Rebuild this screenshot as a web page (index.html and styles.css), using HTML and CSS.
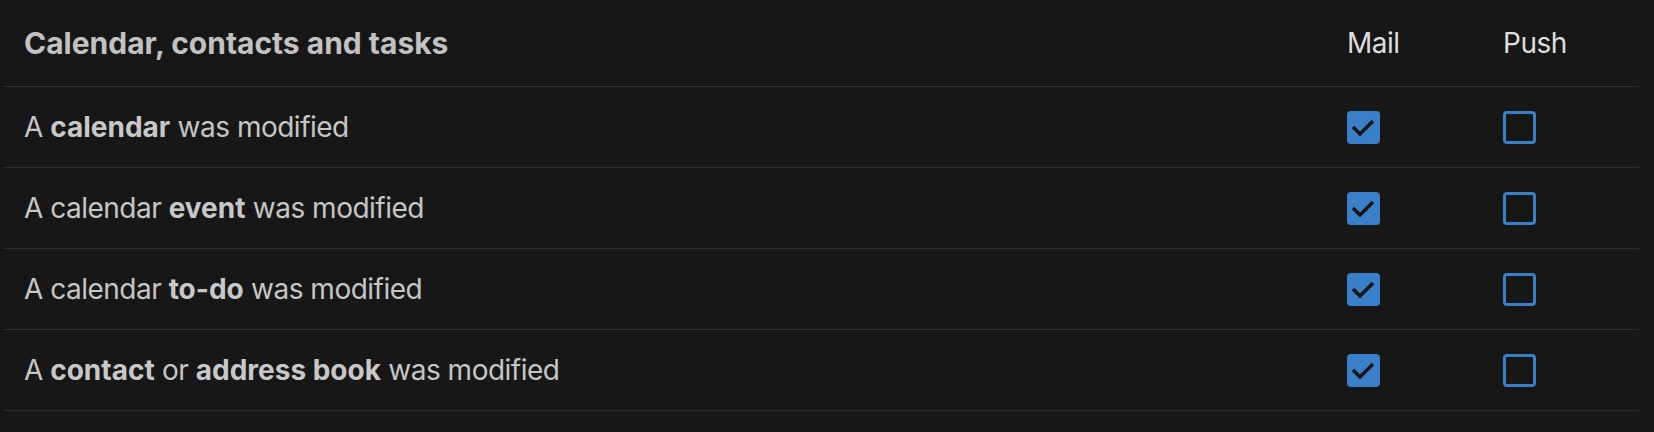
FILE: index.html
```html
<!DOCTYPE html>
<html lang="en">
<head>
<meta charset="utf-8">
<title>Notifications</title>
<link rel="stylesheet" href="styles.css">
</head>
<body>
<div class="table">
  <div class="row head">
    <div class="cell title"><span>Calendar, contacts and tasks</span></div>
    <div class="cell colhead"><span>Mail</span></div>
    <div class="cell colhead"><span>Push</span></div>
  </div>
  <div class="row">
    <div class="cell label"><span>A <b>calendar</b> was modified</span></div>
    <div class="cell"><span class="box checked"><svg viewBox="0 0 33 33"><polyline points="6,16 13,23 26,10"/></svg></span></div>
    <div class="cell"><span class="box"></span></div>
  </div>
  <div class="row">
    <div class="cell label"><span>A calendar <b>event</b> was modified</span></div>
    <div class="cell"><span class="box checked"><svg viewBox="0 0 33 33"><polyline points="6,16 13,23 26,10"/></svg></span></div>
    <div class="cell"><span class="box"></span></div>
  </div>
  <div class="row">
    <div class="cell label"><span>A calendar <b>to-do</b> was modified</span></div>
    <div class="cell"><span class="box checked"><svg viewBox="0 0 33 33"><polyline points="6,16 13,23 26,10"/></svg></span></div>
    <div class="cell"><span class="box"></span></div>
  </div>
  <div class="row">
    <div class="cell label"><span>A <b>contact</b> or <b>address book</b> was modified</span></div>
    <div class="cell"><span class="box checked"><svg viewBox="0 0 33 33"><polyline points="6,16 13,23 26,10"/></svg></span></div>
    <div class="cell"><span class="box"></span></div>
  </div>
</div>
</body>
</html>
```
FILE: styles.css
```css
html, body {
  margin: 0;
  padding: 0;
  background: #171717;
}
body {
  font-family: Inter, "Noto Sans", sans-serif;
  color: #c6c6c6;
  width: 1654px;
  height: 432px;
  overflow: hidden;
}
.table {
  margin: 0 15px 0 3px;
}
.row {
  display: grid;
  grid-template-columns: 1fr 156px 156px;
  height: 80px;
  border-bottom: 1px solid #2b2b2b;
}
.row.head {
  height: 86px;
}
.cell {
  display: flex;
  align-items: center;
  padding-left: 20px;
  font-size: 28px;
}
.title {
  font-weight: 700;
  font-size: 30px;
  color: #c2c2c2;
  padding-left: 21px;
}
.colhead {
  color: #dedede;
  letter-spacing: -0.5px;
}
.label {
  padding-left: 21px;
  color: #c6c6c6;
  letter-spacing: -0.5px;
}
.label b {
  font-weight: 700;
  color: #c8c8c8;
  letter-spacing: 0;
}
.box {
  width: 33px;
  height: 33px;
  box-sizing: border-box;
  border: 3px solid #3a80c9;
  border-radius: 4px;
  display: block;
}
.box.checked {
  background: #3a80c9;
  border: none;
}
.box svg {
  display: block;
  width: 33px;
  height: 33px;
}
.box polyline {
  fill: none;
  stroke: #171717;
  stroke-width: 3.6;
  stroke-linecap: butt;
  stroke-linejoin: miter;
}
```
